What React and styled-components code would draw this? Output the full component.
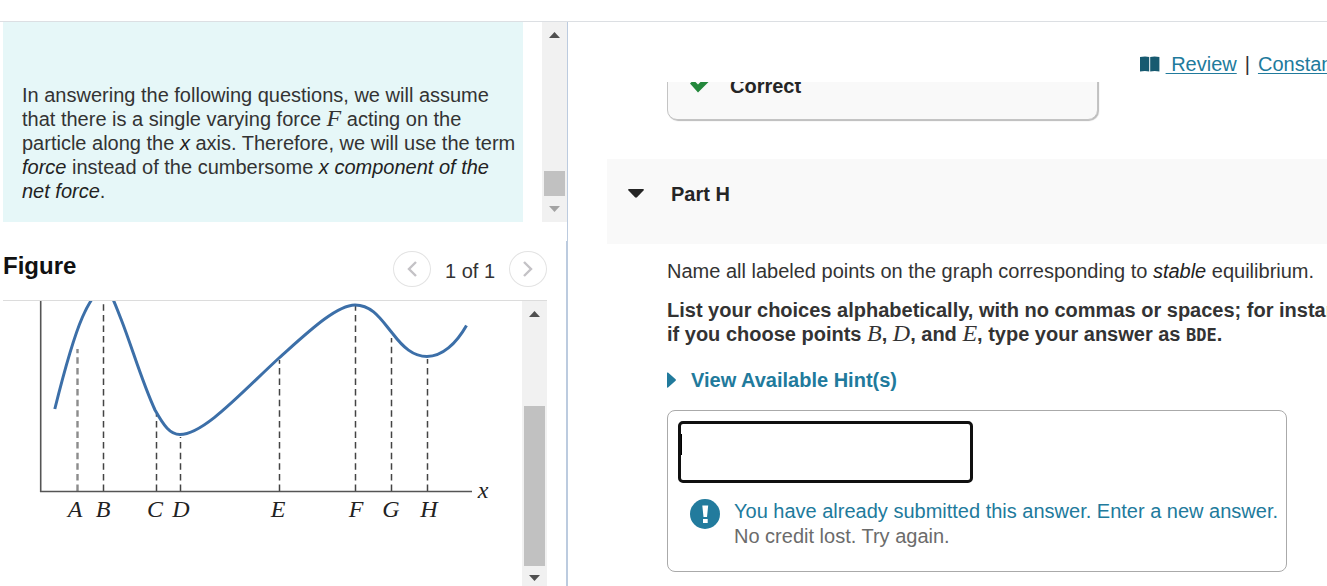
import React, { useState } from 'react';
import styled, { createGlobalStyle } from 'styled-components';

const GlobalStyle = createGlobalStyle`
  * {
    box-sizing: border-box;
  }

  body {
    margin: 0;
    background: #ffffff;
    color: #333333;
    font-family: "Liberation Sans", Arial, sans-serif;
    font-size: 20px;
    line-height: 24px;
    overflow: hidden;
  }
`;

const points = [
  { name: 'A', x: 77, top: 349, label: 75, faint: true },
  { name: 'B', x: 103, top: 296, label: 103 },
  { name: 'C', x: 156, top: 414, label: 155 },
  { name: 'D', x: 180, top: 437, label: 181 },
  { name: 'E', x: 279, top: 360, label: 278 },
  { name: 'F', x: 355, top: 306, label: 356 },
  { name: 'G', x: 391, top: 338, label: 391 },
  { name: 'H', x: 427, top: 359, label: 429 },
];

const Graph = () => (
  <GraphSvg viewBox="3 301 519 285" width={519} height={285} role="img" aria-label="Graph with labeled points A to H along x">
    {points.map((p) => (
      <line
        key={p.name}
        x1={p.x + 0.5}
        x2={p.x + 0.5}
        y1={491}
        y2={p.top}
        stroke={p.faint ? '#8c8c8c' : '#444444'}
        strokeWidth={p.faint ? 2.4 : 1.5}
        strokeDasharray="6.5 4.1"
      />
    ))}
    <path d="M40.7 301V491.5H472" fill="none" stroke="#555555" strokeWidth="1.6" />
    <path
      d="M54.8 409C63 376 72 341 82.500 317C90 300 97 290 104 290C111 290 114 302 121 319C132 347 142 382 155 410C164 426 170 434.500 180 434.500C204 434.500 242 392 279 358C306 334 336 305 355 305C373 305 382 321 393 334C403 347 413 356.500 427 356.500C442 356.500 456 344 466.500 325.500"
      fill="none"
      stroke="#3c6fa8"
      strokeWidth="3"
    />
    {points.map((p) => (
      <text key={p.name} x={p.label} y={517} textAnchor="middle">{p.name}</text>
    ))}
    <text x={483} y={498} textAnchor="middle">x</text>
  </GraphSvg>
);

const ScrollBar = ({ before, thumb, after, atEnd, cut }) => (
  <Track $cut={cut} aria-hidden="true">
    <Arrow viewBox="0 0 11 6"><path d="M5.500 0L11 6H0Z" fill="#505050" /></Arrow>
    <Space $grow={before} />
    <Thumb $grow={thumb} />
    <Space $grow={after} />
    <Arrow viewBox="0 0 11 6"><path d="M0 0H11L5.500 6Z" fill={atEnd ? '#a3a3a3' : '#505050'} /></Arrow>
  </Track>
);

const App = () => {
  const [answer, setAnswer] = useState('');

  return (
    <Page>
      <GlobalStyle />
      <TopBar />
      <Columns>
        <LeftPane>
          <IntroRow>
            <Intro>
              In answering the following questions, we will assume that there is a single varying
              force <MathVar>F</MathVar> acting on the particle along the <em>x</em> axis. Therefore,
              we will use the term <em>force</em> instead of the cumbersome <em>x component of the
              net force</em>.
            </Intro>
            <ScrollBar before={133} thumb={25} after={10} atEnd />
          </IntroRow>
          <FigurePane>
            <FigureHeader>
              <FigureTitle>Figure</FigureTitle>
              <RoundButton aria-label="Previous figure">
                <svg width="12" height="18" viewBox="0 0 12 18"><path d="M10 2L3 9L10 16" /></svg>
              </RoundButton>
              <Count>1 of 1</Count>
              <RoundButton aria-label="Next figure">
                <svg width="12" height="18" viewBox="0 0 12 18"><path d="M2 2L9 9L2 16" /></svg>
              </RoundButton>
            </FigureHeader>
            <FigureView>
              <GraphBox><Graph /></GraphBox>
              <ScrollBar before={89} thumb={160} after={9} cut />
            </FigureView>
          </FigurePane>
        </LeftPane>

        <RightPane>
          <Links>
            <svg width="20" height="16" viewBox="0 0 20 16" aria-hidden="true">
              <path d="M0 1C3 .2 7 .2 9.200 .9V15.500C7 14.800 3 14.800 0 15.500ZM10.200 .9C13 .2 16.500 .2 19.400 1V15.500C16.500 14.800 13 14.800 10.200 15.500Z" fill="#175a70" />
            </svg>
            <Link href="#review">&nbsp;Review</Link>
            <Divider>|</Divider>
            <Link href="#constants">Constants</Link>
          </Links>
          <Work>
            <CorrectBox>
              <svg width="20" height="16" viewBox="0 0 20 16" aria-hidden="true">
                <path d="M0 5.500L3.500 2L8 6.500L14.500 0H20V2.500L8 14.500Z" fill="#24883c" />
              </svg>
              Correct
            </CorrectBox>
            <PartHeader>
              <svg width="16" height="9" viewBox="0 0 16 9" aria-hidden="true">
                <path d="M1 0H15Q16.500 .3 15.500 1.500L9 8.300Q8 9.200 7 8.300L.5 1.500Q-.5 .3 1 0Z" fill="#252525" />
              </svg>
              <PartTitle>Part H</PartTitle>
            </PartHeader>
            <Question>
              <Prompt>Name all labeled points on the graph corresponding to <em>stable</em> equilibrium.</Prompt>
              <Instructions id="instructions">
                List your choices alphabetically, with no commas or spaces; for instance,
                <br />
                if you choose points <MathVar>B</MathVar>, <MathVar>D</MathVar>, and <MathVar>E</MathVar>, type your answer as <code>BDE</code>.
              </Instructions>
              <HintButton>
                <svg width="9" height="16" viewBox="0 0 9 16" aria-hidden="true">
                  <path d="M0 1Q0 0 1 .6L8.600 7.300Q9.200 8 8.600 8.700L1 15.400Q0 16 0 15Z" fill="#217a9c" />
                </svg>
                View Available Hint(s)
              </HintButton>
              <AnswerBox>
                <AnswerInput
                  type="text"
                  aria-labelledby="instructions"
                  value={answer}
                  onChange={(e) => setAnswer(e.target.value)}
                />
                <Feedback>
                  <svg width="30" height="30" viewBox="0 0 30 30" aria-hidden="true">
                    <circle cx="15" cy="15" r="15" fill="#227b9d" />
                    <path d="M12.300 6.500H18.200L17 18H13.500ZM13 20H17.700V24H13Z" fill="#ffffff" />
                  </svg>
                  <div>
                    <Notice>You have already submitted this answer. Enter a new answer.</Notice>
                    <Muted>No credit lost. Try again.</Muted>
                  </div>
                </Feedback>
              </AnswerBox>
            </Question>
          </Work>
        </RightPane>
      </Columns>
    </Page>
  );
};

const Page = styled.div`
  display: flex;
  flex-direction: column;
  height: 100vh;
`;

const TopBar = styled.header`
  flex: none;
  height: 22px;
  border-bottom: 1px solid #dcdfe3;
`;

const Columns = styled.div`
  flex: 1;
  min-height: 0;
  display: grid;
  grid-template-columns: minmax(0, 568fr) minmax(0, 759fr);
`;

const LeftPane = styled.section`
  display: flex;
  flex-direction: column;
  min-height: 0;
`;

const IntroRow = styled.div`
  flex: none;
  display: flex;
  gap: 19px;
  padding: 0 0 19px 3px;
  border-right: 1px solid #bccbdf;
`;

const Intro = styled.div`
  flex: 1;
  padding: 61px 6px 19px 19px;
  background: #e6f7f8;

  em {
    color: #222222;
  }
`;

const MathVar = styled.i`
  font-family: "Liberation Serif", "Times New Roman", serif;
  font-size: 24px;
  font-weight: 400;
  line-height: 0;
`;

const Track = styled.div`
  flex: none;
  width: 25px;
  display: flex;
  flex-direction: column;
  align-items: center;
  padding: 10px 2px ${({ $cut }) => ($cut ? '5px' : '10px')};
  background: #f1f1f1;
`;

const Arrow = styled.svg`
  flex: none;
  width: 11px;
  height: 6px;
`;

const Space = styled.div`
  flex: ${({ $grow }) => $grow};
`;

const Thumb = styled.div`
  flex: ${({ $grow }) => $grow};
  align-self: stretch;
  background: #c1c1c1;
`;

const FigurePane = styled.div`
  flex: 1;
  min-height: 0;
  display: flex;
  flex-direction: column;
  padding: 0 19px 0 3px;
  border-right: 2px solid #bccbdf;
`;

const FigureHeader = styled.div`
  flex: none;
  display: flex;
  align-items: center;
  height: 60px;
  padding-bottom: 4px;
  border-bottom: 1px solid #dcdcdc;
`;

const FigureTitle = styled.h2`
  flex: 1;
  margin: 0;
  padding-bottom: 6px;
  color: #111111;
  font-size: 24px;
`;

const RoundButton = styled.button`
  display: flex;
  align-items: center;
  justify-content: center;
  width: 38px;
  height: 36px;
  padding: 0;
  border: 1px solid #e3e3e3;
  border-radius: 50%;
  background: #ffffff;

  path {
    fill: none;
    stroke: #c4c2c6;
    stroke-width: 2.4;
  }
`;

const Count = styled.span`
  width: 78px;
  padding-top: 4px;
  text-align: center;
`;

const FigureView = styled.div`
  flex: 1;
  min-height: 0;
  display: flex;
`;

const GraphBox = styled.div`
  flex: 1;
  overflow: hidden;
`;

const GraphSvg = styled.svg`
  display: block;

  text {
    fill: #222222;
    font-family: "Liberation Serif", "Times New Roman", serif;
    font-size: 24px;
    font-style: italic;
  }
`;

const RightPane = styled.main`
  display: flex;
  flex-direction: column;
  min-height: 0;
  overflow: hidden;
`;

const Links = styled.nav`
  flex: none;
  display: flex;
  align-items: center;
  justify-content: flex-end;
  height: 60px;
  padding-top: 24px;
  margin-right: -21px;
  white-space: nowrap;
`;

const Link = styled.a`
  margin-left: 6px;
  color: #217a9c;
  text-decoration-thickness: 1px;
  text-underline-offset: 2px;
`;

const Divider = styled.span`
  margin: 0 2px 0 8px;
`;

const Work = styled.div`
  flex: 1;
  min-height: 0;
  padding-left: 39px;
  overflow: hidden;
`;

/* the top of this box is scrolled out of view */
const CorrectBox = styled.div`
  display: flex;
  align-items: center;
  gap: 20px;
  width: 431px;
  max-width: 100%;
  height: 68px;
  margin: -30px 0 39px 60px;
  padding: 0 22px;
  border: 1px solid #c4c4c4;
  border-radius: 10px;
  background: #f9f9f9;
  box-shadow: 1px 1px 1px #bbbbbb;
  color: #252525;
  font-weight: 700;
`;

const PartHeader = styled.div`
  display: flex;
  align-items: center;
  gap: 27px;
  height: 85px;
  padding: 0 21px 16px;
  background: #f9f9f9;
`;

const PartTitle = styled.h2`
  margin: 0;
  color: #252525;
  font-size: 20px;
`;

const Question = styled.div`
  padding: 15px 40px 0 60px;
`;

const Prompt = styled.p`
  margin: 0 0 15px;
  white-space: nowrap;

  em {
    color: #222222;
  }
`;

const Instructions = styled.p`
  margin: 0 0 22px;
  font-weight: 700;
  white-space: nowrap;

  code {
    font-family: "DejaVu Sans Mono", monospace;
    font-size: 17px;
    line-height: 0;
  }
`;

const HintButton = styled.button`
  display: flex;
  align-items: center;
  gap: 15px;
  margin-bottom: 18px;
  padding: 0;
  border: 0;
  background: none;
  color: #217a9c;
  font: inherit;
  font-weight: 700;
`;

const AnswerBox = styled.div`
  height: 162px;
  padding: 10px;
  border: 1px solid #aaaaaa;
  border-radius: 8px;
`;

/* the background bar stands for the text cursor */
const AnswerInput = styled.input`
  display: block;
  width: 295px;
  max-width: 100%;
  height: 62px;
  padding: 0 8px;
  border: 3px solid #101010;
  border-radius: 5px;
  outline: none;
  background: linear-gradient(#000000, #000000) no-repeat 0 10px / 1px 21px;
  font: inherit;
`;

const Feedback = styled.div`
  display: flex;
  gap: 14px;
  padding: 16px 0 0 12px;
  line-height: 25px;

  svg {
    flex: none;
  }
`;

const Notice = styled.div`
  color: #217a9c;
  white-space: nowrap;
`;

const Muted = styled.div`
  color: #6b6b6b;
`;

export default App;
